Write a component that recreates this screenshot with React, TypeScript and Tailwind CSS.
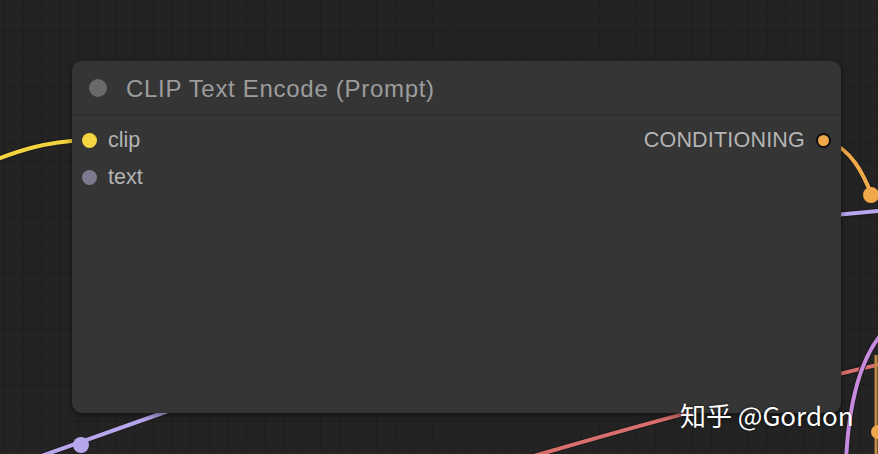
import React from "react";

function Canvas() {
  return (
    <svg className="absolute inset-0" width="878" height="454" viewBox="0 0 878 454">
      <defs>
        <pattern id="grid" x="4" y="12" width="18.6" height="18.6" patternUnits="userSpaceOnUse">
          <path d="M 18.6 0 L 0 0 0 18.6" fill="none" stroke="#1a1a1a" strokeWidth="1.2" />
        </pattern>
      </defs>
      <rect width="878" height="454" fill="#232323" />
      <rect width="878" height="454" fill="url(#grid)" />
      <path d="M -10 162 C 20 150, 45 142, 85 140" stroke="#1a1a1a" strokeWidth="6" fill="none" />
      <path d="M -10 162 C 20 150, 45 142, 85 140" stroke="#f2d43f" strokeWidth="4" fill="none" />
      <path d="M 30 460 L 185 405" stroke="#1a1a1a" strokeWidth="6" fill="none" />
      <path d="M 30 460 L 185 405" stroke="#b7a6ec" strokeWidth="4" fill="none" />
      <circle cx="81" cy="445" r="8" fill="#b7a6ec" />
      <path d="M 520 460 C 650 422, 760 392, 890 362" stroke="#1a1a1a" strokeWidth="6" fill="none" />
      <path d="M 520 460 C 650 422, 760 392, 890 362" stroke="#d9706e" strokeWidth="4" fill="none" />
      <path d="M 846 460 C 849 400, 862 350, 890 325" stroke="#1a1a1a" strokeWidth="6" fill="none" />
      <path d="M 846 460 C 849 400, 862 350, 890 325" stroke="#c98be0" strokeWidth="4" fill="none" />
      <path d="M 835 215 L 890 210" stroke="#1a1a1a" strokeWidth="6" fill="none" />
      <path d="M 835 215 L 890 210" stroke="#b7a6ec" strokeWidth="4" fill="none" />
      <path d="M 830 142 C 850 150, 862 170, 872 196" stroke="#1a1a1a" strokeWidth="6" fill="none" />
      <path d="M 830 142 C 850 150, 862 170, 872 196" stroke="#f0a94a" strokeWidth="4" fill="none" />
      <circle cx="871" cy="195" r="8" fill="#f0a94a" />
      <path d="M 876 355 L 876 454" stroke="#c08a45" strokeWidth="3" fill="none" />
      <circle cx="878" cy="432" r="7" fill="#f0a94a" />
    </svg>
  );
}

function Slot({ color, label }: { color: string; label: string }) {
  return (
    <div className="flex items-center h-[37px]">
      <span className={`w-[15px] h-[15px] rounded-full ${color}`} />
      <span className="ml-[11px] text-[21.5px] text-[#b4b4b4] font-['Liberation_Sans',Arial,sans-serif]">{label}</span>
    </div>
  );
}

export default function App() {
  return (
    <div className="relative w-[878px] h-[454px] overflow-hidden bg-[#232323] font-['Liberation_Sans',Arial,sans-serif]">
      <Canvas />
      <div className="absolute left-[72px] top-[61px] w-[769px] h-[352px] rounded-[10px] bg-[#353535] shadow-[0_2px_6px_rgba(0,0,0,0.5)] flex flex-col">
        <div className="h-[55px] shrink-0 flex items-center border-b-2 border-[#2e2e2e] rounded-t-[10px] bg-[#353535]">
          <span className="ml-[17px] w-[18px] h-[18px] rounded-full bg-[#6a6a6a]" />
          <span className="ml-[19px] mt-[2px] text-[24px] tracking-[0.7px] text-[#9c9c9c] font-['Liberation_Sans',Arial,sans-serif]">CLIP Text Encode (Prompt)</span>
        </div>
        <div className="flex justify-between pt-[6px]">
          <div className="flex flex-col pl-[10px]">
            <Slot color="bg-[#f3d640]" label="clip" />
            <Slot color="bg-[#7d7a8f]" label="text" />
          </div>
          <div className="flex items-center h-[37px] pr-[10px]">
            <span className="text-[21.5px] tracking-[0.2px] text-[#b4b4b4] font-['Liberation_Sans',Arial,sans-serif]">CONDITIONING</span>
            <span className="ml-[11px] w-[15px] h-[15px] rounded-full bg-[#f0a94a] border-2 border-[#111]" />
          </div>
        </div>
      </div>
      <div className="absolute left-[680px] top-[402px] text-[26px] text-white leading-none [text-shadow:0_0_3px_rgba(0,0,0,0.6)] font-['Noto_Sans_CJK_SC','Noto_Sans',sans-serif]">
        知乎 @Gordon
      </div>
    </div>
  );
}
